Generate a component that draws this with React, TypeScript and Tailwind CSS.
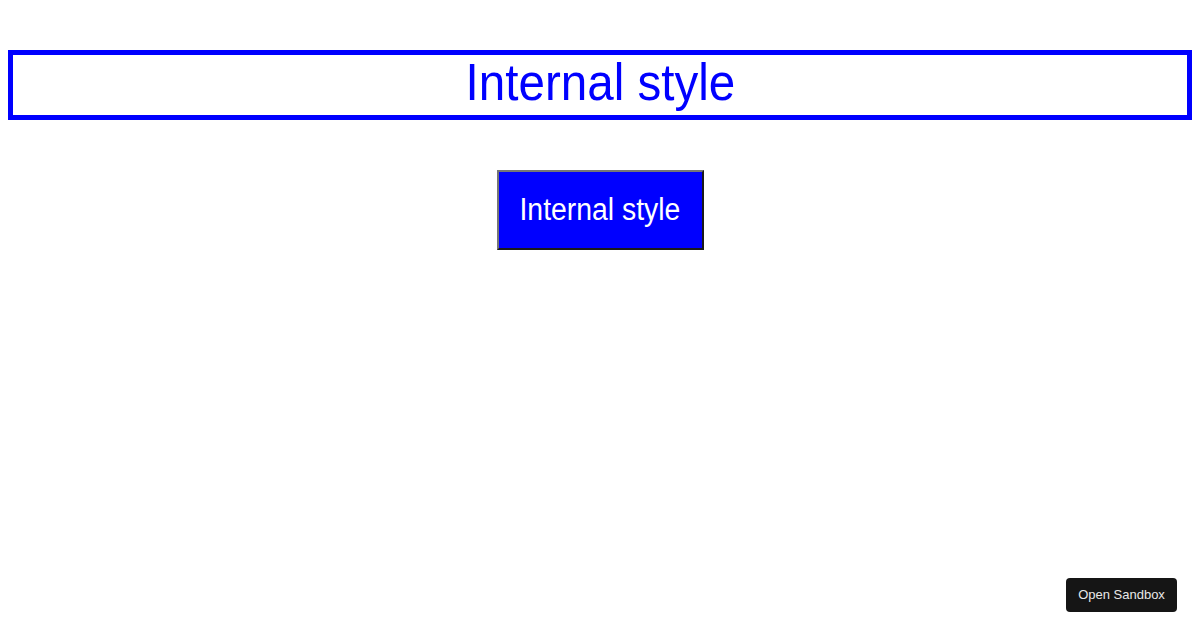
import React from "react";

export default function App() {
  return (
    <div className="relative w-[1200px] h-[630px] bg-white overflow-hidden" style={{ fontFamily: '"Liberation Sans", Arial, sans-serif' }}>
      <div className="pt-[50px] px-[8px]">
        <h1 className="h-[70px] border-[5px] border-[#0000ff] text-[#0000ff] text-center text-[52px] leading-[55px] font-normal">
          <span className="inline-block scale-x-[0.915]">Internal style</span>
        </h1>
      </div>
      <div className="flex justify-center mt-[50px]">
        <button className="w-[207px] h-[80px] bg-[#0000ff] text-white text-[31px] leading-[1.15] border-2 border-t-[#767676] border-l-[#767676] border-r-[#1a1a1a] border-b-[#1a1a1a]">
          <span className="inline-block scale-x-[0.915]">Internal style</span>
        </button>
      </div>
      <div className="absolute left-[1066px] top-[578px] w-[111px] h-[34px] rounded-[4px] bg-[#151515] text-[#e8e8e8] text-[13px] flex items-center justify-center" style={{ fontFamily: '"Liberation Sans", Arial, sans-serif' }}>
        Open Sandbox
      </div>
    </div>
  );
}
